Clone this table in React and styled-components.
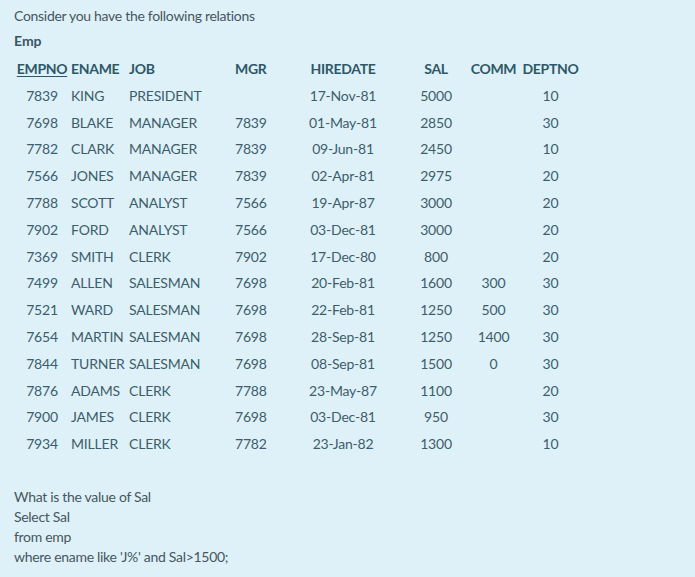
import React from "react";
import styled, { createGlobalStyle } from "styled-components";

const Global = createGlobalStyle`
  html, body { margin: 0; padding: 0; background: #dff1f8; }
  body { font-family: Lato, "Open Sans", sans-serif; }
`;

const Page = styled.div`
  background: #dff1f8;
  min-height: 577px;
  padding: 6px 14px 0 14px;
  box-sizing: border-box;
  color: #46565f;
  font-size: 14px;
`;

const Para = styled.p`
  margin: 0;
  line-height: 20px;
  letter-spacing: -0.3px;
`;

const Title = styled.div`
  margin-top: 5px;
  font-weight: 700;
  line-height: 20px;
  color: #3a5563;
`;

const Table = styled.div`
  margin-top: 3px;
  margin-left: 1px;
  display: grid;
  grid-template-columns: 54px 58px 106px 47px 126px 60px 55px 59px;
  grid-template-rows: 28px;
  grid-auto-rows: 26.8px;
  color: #3c5d6c;
`;

const Cell = styled.div`
  display: flex;
  align-items: center;
  justify-content: ${(p) => (p.$align === "left" ? "flex-start" : "center")};
  padding: 0 2px;
  white-space: nowrap;
  font-weight: ${(p) => (p.$head ? 700 : 400)};
  color: ${(p) => (p.$head ? "#2e5869" : "#3c5d6c")};
  text-decoration: ${(p) => (p.$key ? "underline" : "none")};
  text-underline-offset: 2px;
  letter-spacing: ${(p) => (p.$head ? "-0.3px" : "-0.2px")};
`;

const Query = styled.div`
  margin-top: 30px;
`;

const cols = [
  { name: "EMPNO", align: "center", key: true },
  { name: "ENAME", align: "left" },
  { name: "JOB", align: "left" },
  { name: "MGR", align: "left" },
  { name: "HIREDATE", align: "center" },
  { name: "SAL", align: "center" },
  { name: "COMM", align: "center" },
  { name: "DEPTNO", align: "center" },
];

const rows = [
  ["7839", "KING", "PRESIDENT", "", "17-Nov-81", "5000", "", "10"],
  ["7698", "BLAKE", "MANAGER", "7839", "01-May-81", "2850", "", "30"],
  ["7782", "CLARK", "MANAGER", "7839", "09-Jun-81", "2450", "", "10"],
  ["7566", "JONES", "MANAGER", "7839", "02-Apr-81", "2975", "", "20"],
  ["7788", "SCOTT", "ANALYST", "7566", "19-Apr-87", "3000", "", "20"],
  ["7902", "FORD", "ANALYST", "7566", "03-Dec-81", "3000", "", "20"],
  ["7369", "SMITH", "CLERK", "7902", "17-Dec-80", "800", "", "20"],
  ["7499", "ALLEN", "SALESMAN", "7698", "20-Feb-81", "1600", "300", "30"],
  ["7521", "WARD", "SALESMAN", "7698", "22-Feb-81", "1250", "500", "30"],
  ["7654", "MARTIN", "SALESMAN", "7698", "28-Sep-81", "1250", "1400", "30"],
  ["7844", "TURNER", "SALESMAN", "7698", "08-Sep-81", "1500", "0", "30"],
  ["7876", "ADAMS", "CLERK", "7788", "23-May-87", "1100", "", "20"],
  ["7900", "JAMES", "CLERK", "7698", "03-Dec-81", "950", "", "30"],
  ["7934", "MILLER", "CLERK", "7782", "23-Jan-82", "1300", "", "10"],
];

export default function App() {
  return (
    <>
      <Global />
      <Page>
        <Para>Consider you have the following relations</Para>
        <Title>Emp</Title>
        <Table>
          {cols.map((c) => (
            <Cell key={c.name} $head $align={c.align} $key={c.key}>
              {c.name}
            </Cell>
          ))}
          {rows.map((r, i) =>
            r.map((v, j) => (
              <Cell key={i + "-" + j} $align={cols[j].align}>
                {v}
              </Cell>
            ))
          )}
        </Table>
        <Query>
          <Para>What is the value of Sal</Para>
          <Para>Select Sal</Para>
          <Para>from emp</Para>
          <Para>where ename like 'J%' and Sal&gt;1500;</Para>
        </Query>
      </Page>
    </>
  );
}
